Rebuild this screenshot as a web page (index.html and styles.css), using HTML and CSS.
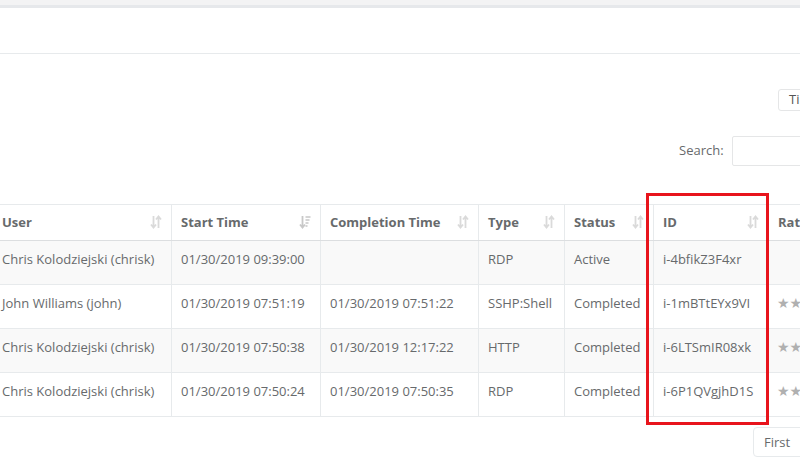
FILE: index.html
```html
<!DOCTYPE html>
<html>
<head>
<meta charset="utf-8">
<link rel="stylesheet" href="styles.css">
</head>
<body>
<div class="ibox">
  <div class="ibox-title"></div>
  <div class="ibox-content">
    <div class="toolbar">
      <div class="select">Time Range</div>
    </div>
    <div class="search-row">
      <label class="search-label">Search:</label>
      <div class="search-input"></div>
    </div>
    <table class="grid">
      <colgroup>
        <col class="c-user"><col class="c-start"><col class="c-comp"><col class="c-type"><col class="c-status"><col class="c-id"><col class="c-rating">
      </colgroup>
      <thead>
        <tr>
          <th><div class="th-in"><span>User</span><svg class="sort" viewBox="0 0 12 14"><path d="M3.5 1v11M1 9.5l2.5 3 2.5-3M8.5 13V2M6 4.5l2.5-3 2.5 3"/></svg></div></th>
          <th><div class="th-in"><span>Start Time</span><svg class="sort sorted" viewBox="0 0 12 14"><path d="M3.5 1v11M1 9.5l2.5 3 2.5-3"/><path class="bars" d="M6.5 2h5M6.5 5h4M6.5 8h3M6.5 11h2"/></svg></div></th>
          <th><div class="th-in"><span>Completion Time</span><svg class="sort" viewBox="0 0 12 14"><path d="M3.5 1v11M1 9.5l2.5 3 2.5-3M8.5 13V2M6 4.5l2.5-3 2.5 3"/></svg></div></th>
          <th><div class="th-in"><span>Type</span><svg class="sort" viewBox="0 0 12 14"><path d="M3.5 1v11M1 9.5l2.5 3 2.5-3M8.5 13V2M6 4.5l2.5-3 2.5 3"/></svg></div></th>
          <th><div class="th-in"><span>Status</span><svg class="sort" viewBox="0 0 12 14"><path d="M3.5 1v11M1 9.5l2.5 3 2.5-3M8.5 13V2M6 4.5l2.5-3 2.5 3"/></svg></div></th>
          <th><div class="th-in"><span>ID</span><svg class="sort" viewBox="0 0 12 14"><path d="M3.5 1v11M1 9.5l2.5 3 2.5-3M8.5 13V2M6 4.5l2.5-3 2.5 3"/></svg></div></th>
          <th><div class="th-in"><span>Rating</span></div></th>
        </tr>
      </thead>
      <tbody>
        <tr class="odd">
          <td>Chris Kolodziejski (chrisk)</td><td>01/30/2019 09:39:00</td><td></td><td>RDP</td><td>Active</td><td>i-4bfikZ3F4xr</td><td></td>
        </tr>
        <tr>
          <td>John Williams (john)</td><td>01/30/2019 07:51:19</td><td>01/30/2019 07:51:22</td><td>SSHP:Shell</td><td>Completed</td><td>i-1mBTtEYx9VI</td><td class="stars">★★★★★</td>
        </tr>
        <tr class="odd">
          <td>Chris Kolodziejski (chrisk)</td><td>01/30/2019 07:50:38</td><td>01/30/2019 12:17:22</td><td>HTTP</td><td>Completed</td><td>i-6LTSmIR08xk</td><td class="stars">★★★★★</td>
        </tr>
        <tr>
          <td>Chris Kolodziejski (chrisk)</td><td>01/30/2019 07:50:24</td><td>01/30/2019 07:50:35</td><td>RDP</td><td>Completed</td><td>i-6P1QVgjhD1S</td><td class="stars">★★★★★</td>
        </tr>
      </tbody>
    </table>
    <div class="pager">
      <div class="page-btn">First</div>
    </div>
  </div>
</div>
<div class="highlight"></div>
</body>
</html>
```

FILE: styles.css
```css
html, body {
  margin: 0;
  padding: 0;
  width: 800px;
  height: 464px;
  overflow: hidden;
  background: #ffffff;
  font-family: "Open Sans", "Liberation Sans", sans-serif;
  font-size: 13px;
  color: #676a6c;
}

.ibox {
  border-top: 5px solid #f3f3f4;
  margin-left: -8px;
  width: 1000px;
}

.ibox-title {
  border-top: 3px solid #e6e8eb;
  border-bottom: 1px solid #e7eaec;
  height: 45px;
  background: #fff;
}

.ibox-content {
  padding-top: 35px;
}

.toolbar {
  display: flex;
  padding-left: 786px;
  height: 22px;
}

.select {
  box-sizing: border-box;
  height: 22px;
  width: 140px;
  border: 1px solid #e5e6e7;
  border-radius: 3px;
  padding: 0 10px;
  line-height: 19px;
  font-size: 13px;
  color: #555;
}

.search-row {
  display: flex;
  align-items: center;
  margin-top: 25px;
  height: 30px;
  padding-left: 687px;
}

.search-label {
  color: #676a6c;
  margin-right: 8px;
  position: relative;
  top: -1px;
}

.search-input {
  box-sizing: border-box;
  width: 200px;
  height: 30px;
  border: 1px solid #e5e6e7;
  border-radius: 2px;
}

.grid {
  margin-top: 38px;
  border-collapse: collapse;
  table-layout: fixed;
  width: 890px;
  border-top: 1px solid #e7eaec;
}

.c-user { width: 179px; }
.c-start { width: 149px; }
.c-comp { width: 158px; }
.c-type { width: 86px; }
.c-status { width: 89px; }
.c-id { width: 115px; }
.c-rating { width: 114px; }

.grid th {
  height: 33px;
  padding: 0 9px 2px;
  text-align: left;
  font-weight: 700;
  color: #676a6c;
  border-left: 1px solid #e7eaec;
  border-bottom: 1px solid #dcdee0;
  vertical-align: middle;
  white-space: nowrap;
}

.th-in {
  display: flex;
  align-items: center;
  justify-content: space-between;
}

.sort {
  width: 12px;
  height: 14px;
  flex: none;
  fill: none;
  stroke: #dadada;
  stroke-width: 1.8;
}

.sort.sorted {
  stroke: #c8c8c8;
}

.sort .bars {
  stroke-width: 1.6;
}

.grid td {
  box-sizing: border-box;
  height: 44px;
  padding: 9px 9px 0;
  vertical-align: top;
  line-height: 18px;
  border-left: 1px solid #e7eaec;
  border-bottom: 1px solid #e7eaec;
  white-space: nowrap;
  overflow: hidden;
}

.grid tr.odd td {
  background: #f9f9f9;
}

.grid td.stars {
  color: #b0b0b0;
  font-family: "DejaVu Sans", sans-serif;
  font-size: 14px;
  padding-left: 8px;
}

.pager {
  display: flex;
  padding-left: 761px;
  margin-top: 10px;
}

.page-btn {
  box-sizing: border-box;
  height: 30px;
  padding: 0 10px;
  line-height: 28px;
  border: 1px solid #e7eaec;
  border-radius: 4px;
  color: #676a6c;
  width: 120px;
}

.highlight {
  position: absolute;
  left: 646px;
  top: 193px;
  width: 117px;
  height: 226px;
  border: 3px solid #e8141c;
}
```
